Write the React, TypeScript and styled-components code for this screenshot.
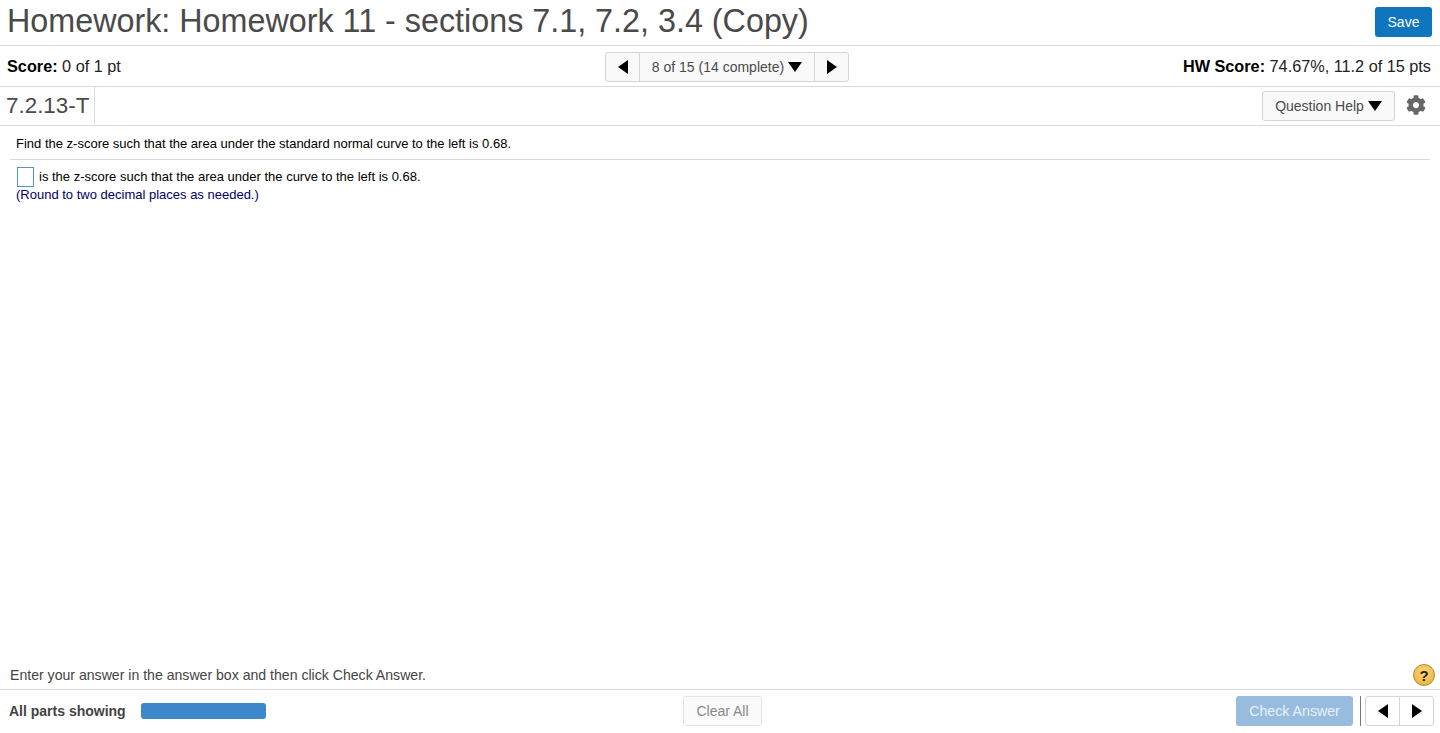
import { FaCog } from "react-icons/fa";
import styled, { createGlobalStyle } from "styled-components";

const GlobalStyle = createGlobalStyle`
  html, body {
    margin: 0;
    padding: 0;
    background: #fff;
  }

  body {
    font-family: "Liberation Sans", Arial, sans-serif;
    color: #000;
  }
`;

const Triangle = ({ dir }: { dir: "left" | "right" | "down" }) => {
  if (dir === "down") {
    return (
      <Glyph width="14" height="10" viewBox="0 0 14 10">
        <path d="M0 0H14L7 10Z" />
      </Glyph>
    );
  }
  return (
    <Glyph width="10" height="14" viewBox="0 0 10 14">
      <path d={dir === "left" ? "M10 0V14L0 7Z" : "M0 0V14L10 7Z"} />
    </Glyph>
  );
};

const App = () => {
  return (
    <>
      <GlobalStyle />
      <Page>
        <TitleBar>
          <Title>Homework: Homework 11 - sections 7.1, 7.2, 3.4 (Copy)</Title>
          <SaveButton>Save</SaveButton>
        </TitleBar>

        <ScoreBar>
          <ScoreText>
            <b>Score:</b> 0 of 1 pt
          </ScoreText>
          <Pager>
            <PagerArrow>
              <Triangle dir="left" />
            </PagerArrow>
            <PagerLabel>
              8 of 15 (14 complete)
              <Triangle dir="down" />
            </PagerLabel>
            <PagerArrow>
              <Triangle dir="right" />
            </PagerArrow>
          </Pager>
          <HwScore>
            <b>HW Score:</b> 74.67%, 11.2 of 15 pts
          </HwScore>
        </ScoreBar>

        <QuestionBar>
          <QuestionId>7.2.13-T</QuestionId>
          <HelpButton>
            Question Help
            <Triangle dir="down" />
          </HelpButton>
          <GearIcon size={20} />
        </QuestionBar>

        <Main>
          <Prompt>
            Find the z-score such that the area under the standard normal curve
            to the left is 0.68.
          </Prompt>
          <Divider />
          <AnswerRow>
            <AnswerBox />
            <span>is the z-score such that the area under the curve to the left is 0.68.</span>
          </AnswerRow>
          <Note>(Round to two decimal places as needed.)</Note>
        </Main>

        <HintRow>
          <span>Enter your answer in the answer box and then click Check Answer.</span>
          <HelpBadge>?</HelpBadge>
        </HintRow>

        <Footer>
          <PartsGroup>
            <PartsLabel>All parts showing</PartsLabel>
            <ProgressBar />
          </PartsGroup>
          <ClearButton>Clear All</ClearButton>
          <FooterActions>
            <CheckButton>Check Answer</CheckButton>
            <ActionRule />
            <FooterPager>
              <FooterArrow>
                <Triangle dir="left" />
              </FooterArrow>
              <FooterArrow>
                <Triangle dir="right" />
              </FooterArrow>
            </FooterPager>
          </FooterActions>
        </Footer>
      </Page>
    </>
  );
};

export default App;

const Page = styled.div`
  height: 100vh;
  display: flex;
  flex-direction: column;
  overflow: hidden;
`;

const Glyph = styled.svg`
  display: block;
  flex: none;
  fill: #000;
`;

const TitleBar = styled.header`
  height: 46px;
  flex: none;
  display: flex;
  align-items: center;
  justify-content: space-between;
  padding: 0 8px 4px 7px;
  box-sizing: border-box;
  border-bottom: 1px solid #d9d9d9;
`;

const Title = styled.h1`
  margin: 0;
  font-size: 32.3px;
  font-weight: 400;
  line-height: 40px;
  color: #4a4a4a;
  white-space: nowrap;
`;

const SaveButton = styled.button`
  width: 57px;
  height: 30px;
  margin-top: 2px;
  padding: 0;
  border: 0;
  border-radius: 3px;
  background: #0f75bd;
  color: #fff;
  font: 400 14px "Liberation Sans", Arial, sans-serif;
`;

const ScoreBar = styled.div`
  height: 41px;
  flex: none;
  box-sizing: border-box;
  display: grid;
  grid-template-columns: 598px 244px 1fr;
  align-items: center;
  padding: 1px 9px 0 7px;
  border-bottom: 1px solid #d9d9d9;
`;

const ScoreText = styled.div`
  font-size: 16.25px;
  color: #222;

  b {
    color: #000;
  }
`;

const HwScore = styled(ScoreText)`
  text-align: right;
`;

const Pager = styled.div`
  height: 30px;
  display: flex;
  box-sizing: border-box;
  border: 1px solid #d5d5d5;
  border-radius: 3px;
  background: #f9f9f9;
`;

const PagerArrow = styled.div`
  width: 33px;
  display: flex;
  align-items: center;
  justify-content: center;
`;

const PagerLabel = styled.div`
  flex: 1;
  display: flex;
  align-items: center;
  justify-content: center;
  gap: 4px;
  font-size: 14px;
  color: #4a4a4a;
  border-left: 1px solid #d5d5d5;
  border-right: 1px solid #d5d5d5;
`;

const QuestionBar = styled.div`
  height: 39px;
  flex: none;
  box-sizing: border-box;
  display: flex;
  align-items: center;
  padding: 0 14px 1px 6px;
  border-bottom: 1px solid #d9d9d9;
`;

const QuestionId = styled.div`
  height: 100%;
  display: flex;
  align-items: center;
  box-sizing: border-box;
  padding-right: 5px;
  margin-right: auto;
  border-right: 1px solid #d9d9d9;
  font-size: 22.4px;
  color: #4a4a4a;
`;

const HelpButton = styled.button`
  width: 133px;
  height: 30px;
  display: flex;
  align-items: center;
  justify-content: center;
  gap: 4px;
  padding: 0;
  border: 1px solid #d5d5d5;
  border-radius: 3px;
  background: #f9f9f9;
  color: #4a4a4a;
  font: 400 14px "Liberation Sans", Arial, sans-serif;
`;

const GearIcon = styled(FaCog)`
  margin: -2px 0 0 11px;
  color: #666;
`;

const Main = styled.main`
  flex: 1;
  min-height: 0;
  padding: 10px 10px 0;
  font-size: 13px;
  line-height: 15px;
`;

const Prompt = styled.div`
  padding: 0 6px 7px;
  line-height: 16px;
`;

const Divider = styled.div`
  height: 1px;
  background: #d4d9dc;
`;

const AnswerRow = styled.div`
  display: flex;
  align-items: center;
  gap: 5px;
  margin-top: 7px;
  padding-left: 7px;
`;

const AnswerBox = styled.div`
  width: 17px;
  height: 20px;
  box-sizing: border-box;
  margin-bottom: -1px;
  border: 1px solid #4e97b5;
`;

const Note = styled.div`
  padding: 1px 6px 0;
  color: #000066;
`;

const HintRow = styled.div`
  height: 33px;
  flex: none;
  box-sizing: border-box;
  display: flex;
  align-items: center;
  justify-content: space-between;
  padding: 4px 5px 0 10px;
  border-bottom: 1px solid #d3d7e2;
  font-size: 14.1px;
  color: #444;
`;

const HelpBadge = styled.div`
  width: 22px;
  height: 22px;
  display: flex;
  align-items: center;
  justify-content: center;
  box-sizing: border-box;
  border: 1px solid #a88a3c;
  border-radius: 50%;
  background: radial-gradient(circle at 50% 35%, #fbd878, #eeaa30);
  color: #222;
  font-size: 15px;
  font-weight: 700;
`;

const Footer = styled.footer`
  flex: 1 0 43px;
  max-height: 43px;
  box-sizing: border-box;
  display: grid;
  grid-template-columns: 674px 79px 1fr;
  align-items: center;
  padding: 0 6px 2px 9px;
`;

const PartsGroup = styled.div`
  display: flex;
  align-items: center;
  gap: 15px;
`;

const PartsLabel = styled.div`
  font-size: 14px;
  font-weight: 700;
  color: #444;
`;

const ProgressBar = styled.div`
  width: 125px;
  height: 16px;
  border-radius: 3px;
  background: #3e87cb;
`;

const ClearButton = styled.button`
  height: 30px;
  padding: 0;
  border: 1px solid #e4e4e4;
  border-radius: 3px;
  background: #fbfbfb;
  color: #888;
  font: 400 14px "Liberation Sans", Arial, sans-serif;
`;

const FooterActions = styled.div`
  display: flex;
  align-items: center;
  justify-content: flex-end;
`;

const CheckButton = styled.button`
  width: 117px;
  height: 30px;
  padding: 0;
  border: 0;
  border-radius: 3px;
  background: #97bcdd;
  color: #e8f1f8;
  font: 400 14.2px "Liberation Sans", Arial, sans-serif;
`;

const ActionRule = styled.div`
  width: 1px;
  height: 30px;
  margin: 0 4px 0 7px;
  background: #777;
`;

const FooterPager = styled.div`
  width: 69px;
  height: 30px;
  display: flex;
  box-sizing: border-box;
  border: 1px solid #d5d5d5;
  border-radius: 3px;
`;

const FooterArrow = styled.div`
  flex: 1;
  display: flex;
  align-items: center;
  justify-content: center;

  & + & {
    border-left: 1px solid #d5d5d5;
  }
`;
